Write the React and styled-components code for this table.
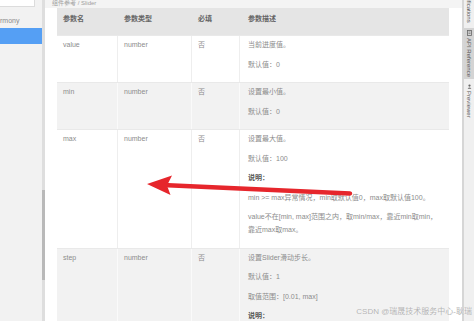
import React from 'react';
import styled, { createGlobalStyle } from 'styled-components';

const GlobalStyle = createGlobalStyle`
  html, body {
    margin: 0;
    padding: 0;
    background: #ffffff;
  }
  body {
    font-family: 'Liberation Sans', 'Noto Sans CJK SC', sans-serif;
  }
`;

const rows = [
  {
    name: 'value',
    type: 'number',
    required: '否',
    shade: false,
    desc: [{ text: '当前进度值。' }, { text: '默认值：0' }],
  },
  {
    name: 'min',
    type: 'number',
    required: '否',
    shade: true,
    desc: [{ text: '设置最小值。' }, { text: '默认值：0' }],
  },
  {
    name: 'max',
    type: 'number',
    required: '否',
    shade: false,
    desc: [
      { text: '设置最大值。' },
      { text: '默认值：100' },
      { text: '说明：', bold: true },
      { text: 'min >= max异常情况，min取默认值0，max取默认值100。' },
      { lines: ['value不在[min, max]范围之内，取min/max，靠近min取min，', '靠近max取max。'] },
    ],
  },
  {
    name: 'step',
    type: 'number',
    required: '否',
    shade: true,
    desc: [
      { text: '设置Slider滑动步长。' },
      { text: '默认值：1' },
      { text: '取值范围：[0.01, max]' },
      { text: '说明：', bold: true },
    ],
  },
];

export default function App() {
  return (
    <Page>
      <GlobalStyle />
      <Sidebar>
        <SideList>
          <SearchBox />
          <SideItem>rmony</SideItem>
          <SideItem $active />
        </SideList>
        <ScrollTrack>
          <ScrollThumb />
        </ScrollTrack>
      </Sidebar>

      <Main>
        <Breadcrumb>组件参考 / Slider</Breadcrumb>
        <Content>
          <Table>
            <HeadRow>
              <HeadCell>参数名</HeadCell>
              <HeadCell>参数类型</HeadCell>
              <HeadCell>必填</HeadCell>
              <HeadCell $wide>参数描述</HeadCell>
            </HeadRow>
            {rows.map(row => (
              <Row key={row.name} $shade={row.shade}>
                <Cell $shade={row.shade}>
                  <P>{row.name}</P>
                </Cell>
                <Cell $shade={row.shade}>
                  <P>{row.type}</P>
                </Cell>
                <Cell $shade={row.shade}>
                  <P>{row.required}</P>
                </Cell>
                <Cell $shade={row.shade} $wide $last>
                  {row.desc.map((d, i) => (
                    <P key={i} $bold={d.bold}>
                      {d.lines
                        ? d.lines.map((l, j) => <Line key={j}>{l}</Line>)
                        : d.text}
                    </P>
                  ))}
                </Cell>
              </Row>
            ))}
          </Table>
        </Content>
      </Main>

      <ToolStrip>
        <Tool $cut>Notifications</Tool>
        <Tool $active>
          <svg width="5" height="6" viewBox="0 0 5 6">
            <rect x="0.5" y="0.5" width="4" height="5" fill="none" stroke="#666" strokeWidth="0.8" />
            <line x1="1.5" y1="2" x2="3.5" y2="2" stroke="#666" strokeWidth="0.6" />
            <line x1="1.5" y1="3.5" x2="3.5" y2="3.5" stroke="#666" strokeWidth="0.6" />
          </svg>
          API Reference
        </Tool>
        <Tool>
          <svg width="5" height="5" viewBox="0 0 5 5">
            <circle cx="2.5" cy="1.6" r="1.1" fill="#666" />
            <path d="M0.6 4.8 Q2.5 2.4 4.4 4.8 Z" fill="#666" />
          </svg>
          Previewer
        </Tool>
      </ToolStrip>

      <Arrow viewBox="0 0 474 321" width="474" height="321">
        <line x1="350" y1="193.5" x2="168" y2="185.2" stroke="#e6262c" strokeWidth="4.5" strokeLinecap="round" />
        <polygon points="147,184 172,175.5 167,185.4 170.5,195" fill="#e6262c" />
      </Arrow>

      <Watermark>CSDN @瑞晟技术服务中心-耿瑞</Watermark>
    </Page>
  );
}

const Page = styled.div`
  position: relative;
  display: flex;
  width: 474px;
  height: 321px;
  overflow: hidden;
  background: #ffffff;
`;

const Sidebar = styled.div`
  display: flex;
  width: 45px;
  flex-shrink: 0;
  background: #f2f2f2;
`;

const SideList = styled.div`
  display: flex;
  flex-direction: column;
  width: 42px;
`;

const SearchBox = styled.div`
  width: 35px;
  height: 7px;
  flex-shrink: 0;
  background: #ffffff;
  border-right: 1px solid #dcdcdc;
  border-bottom: 1px solid #dcdcdc;
  box-sizing: border-box;
  margin-bottom: 6px;
`;

const SideItem = styled.div`
  flex-shrink: 0;
  height: ${p => (p.$active ? '16px' : '15px')};
  line-height: 15px;
  font-size: 7px;
  color: #8a8a8a;
  background: ${p => (p.$active ? '#559ff4' : 'transparent')};
`;

const ScrollTrack = styled.div`
  display: flex;
  flex-direction: column;
  width: 3px;
  padding-top: 190px;
  background: #dedede;
  box-sizing: border-box;
`;

const ScrollThumb = styled.div`
  height: 90px;
  flex-shrink: 0;
  background: #b9b9b9;
`;

const Main = styled.div`
  display: flex;
  flex-direction: column;
  flex: 1;
  min-width: 0;
`;

const Breadcrumb = styled.div`
  flex-shrink: 0;
  height: 8px;
  padding-left: 7px;
  overflow: hidden;
  background: #f4f4f4;
  font-size: 6px;
  line-height: 7px;
  color: #a0a0a0;
`;

const Content = styled.div`
  flex-shrink: 0;
  padding: 0 13px 0 12px;
`;

const Table = styled.div`
  display: flex;
  flex-direction: column;
  width: 392px;
`;

const columns = '61px 74px 48px 209px';

const HeadRow = styled.div`
  display: grid;
  grid-template-columns: ${columns};
  height: 27px;
  background: #e5e5e5;
`;

const HeadCell = styled.div`
  padding: 4px 6px 0 ${p => (p.$wide ? '8px' : '6px')};
  font-size: 7px;
  line-height: 13px;
  font-weight: bold;
  color: #666666;
`;

const Row = styled.div`
  display: grid;
  grid-template-columns: ${columns};
  background: ${p => (p.$shade ? '#f2f2f2' : '#ffffff')};
  border-top: 1px solid #e9e9e9;
`;

const Cell = styled.div`
  padding: 2px 6px 5px ${p => (p.$wide ? '8px' : '6px')};
  border-right: ${p =>
    p.$last ? 'none' : `1px solid ${p.$shade ? '#fafafa' : '#eeeeee'}`};
  font-size: 7px;
  line-height: 13px;
  color: #8c8c8c;
`;

const P = styled.p`
  margin: 0 0 6.5px;
  font-weight: ${p => (p.$bold ? 'bold' : 'normal')};
  color: ${p => (p.$bold ? '#555555' : 'inherit')};
`;

const Line = styled.span`
  display: block;
  white-space: nowrap;
`;

const ToolStrip = styled.div`
  display: flex;
  flex-direction: column;
  align-items: center;
  gap: 3px;
  width: 12px;
  flex-shrink: 0;
  background: #f0f0f0;
  border-left: 2px solid #d6d6d6;
  box-sizing: border-box;
`;

const Tool = styled.div`
  display: flex;
  align-items: center;
  gap: 2px;
  width: 10px;
  flex-shrink: 0;
  padding: 2px 0;
  margin-top: ${p => (p.$cut ? '-12px' : '0')};
  writing-mode: vertical-rl;
  font-size: 6px;
  color: #555555;
  white-space: nowrap;
  background: ${p => (p.$active ? '#d4d4d4' : 'transparent')};
`;

const Arrow = styled.svg`
  position: absolute;
  top: 0;
  left: 0;
  pointer-events: none;
`;

const Watermark = styled.div`
  position: absolute;
  right: 2px;
  bottom: 4px;
  font-size: 8px;
  line-height: 10px;
  color: #b4b4b4;
  text-shadow: 0 0 1px rgba(255, 255, 255, 0.8);
  white-space: nowrap;
`;
